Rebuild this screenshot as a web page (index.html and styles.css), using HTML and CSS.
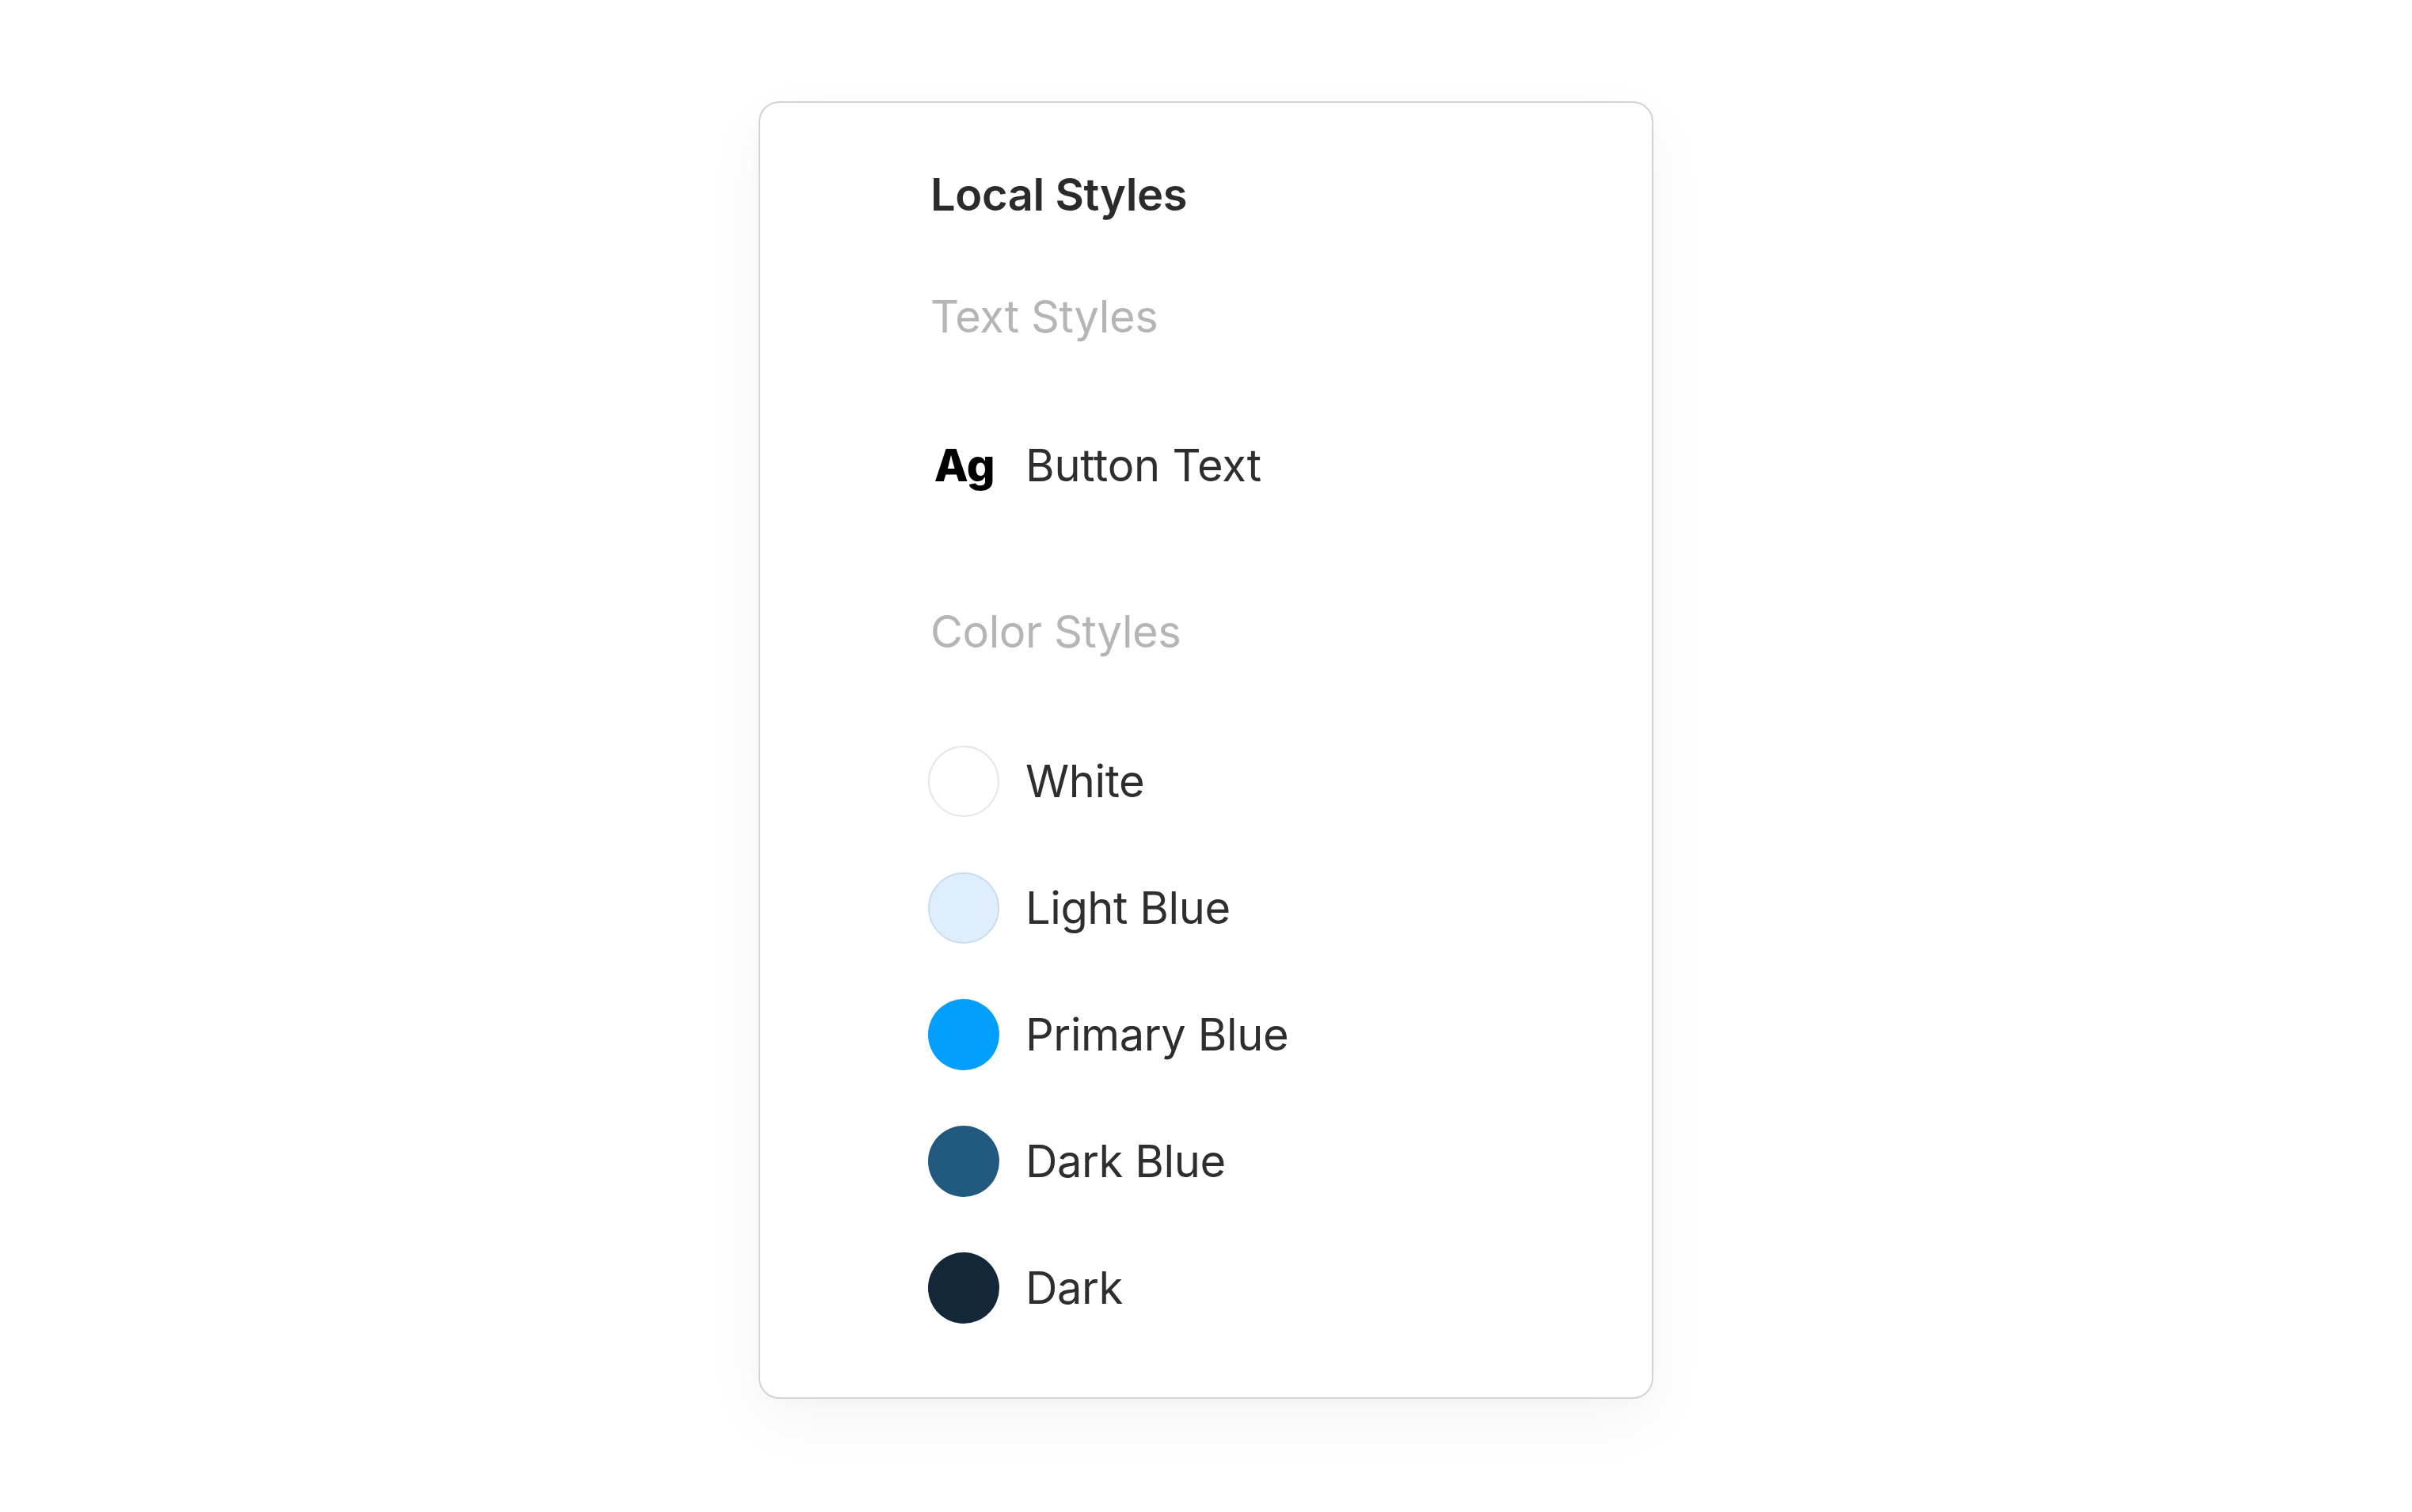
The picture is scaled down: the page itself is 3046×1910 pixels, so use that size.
FILE: index.html
```html
<!DOCTYPE html>
<html lang="en">
<head>
<meta charset="utf-8">
<title>Local Styles</title>
<link rel="stylesheet" href="styles.css">
</head>
<body>
<main class="stage">
  <section class="panel">
    <h1 class="panel-title">Local Styles</h1>
    <h2 class="group-title group-title--text">Text Styles</h2>
    <div class="style-row style-row--text">
      <span class="swatch swatch--type">Ag</span>
      <span class="style-name">Button Text</span>
    </div>
    <h2 class="group-title group-title--color">Color Styles</h2>
    <ul class="color-list">
      <li class="style-row"><span class="swatch swatch--white"></span><span class="style-name">White</span></li>
      <li class="style-row"><span class="swatch swatch--light"></span><span class="style-name">Light Blue</span></li>
      <li class="style-row"><span class="swatch swatch--primary"></span><span class="style-name">Primary Blue</span></li>
      <li class="style-row"><span class="swatch swatch--darkblue"></span><span class="style-name">Dark Blue</span></li>
      <li class="style-row"><span class="swatch swatch--dark"></span><span class="style-name">Dark</span></li>
    </ul>
  </section>
</main>
</body>
</html>
```

FILE: styles.css
```css
* { box-sizing: border-box; }

html, body {
  margin: 0;
  padding: 0;
  background: #ffffff;
}

body {
  font-family: "Inter", "Noto Sans", sans-serif;
  font-size: 56px;
  line-height: 68px;
  letter-spacing: -0.4px;
  color: #333333;
}

.stage {
  display: flex;
  justify-content: center;
  padding-top: 128px;
  min-height: 1910px;
}

.panel {
  width: 1130px;
  height: 1639px;
  border: 2px solid #d3d3d3;
  border-radius: 26px;
  background: #ffffff;
  box-shadow: 0 28px 80px rgba(0, 0, 0, 0.045), 0 4px 20px rgba(0, 0, 0, 0.02);
  padding: 82px 40px 0 212px;
  display: flex;
  flex-direction: column;
  align-items: flex-start;
}

.panel-title {
  margin: 0;
  padding-left: 3px;
  font-size: 56px;
  line-height: 68px;
  font-weight: 600;
  color: #2b2b2b;
}

.group-title {
  margin: 0;
  padding-left: 3px;
  font-size: 56px;
  line-height: 68px;
  font-weight: 400;
  color: #b5b5b5;
}

.group-title--text { margin-top: 86px; }
.group-title--color { margin-top: 142px; }

.style-row {
  display: flex;
  align-items: center;
  gap: 33px;
}

.style-row--text { margin-top: 120px; }

.style-row--text .style-name { letter-spacing: -0.2px; }

.style-name {
  font-size: 56px;
  line-height: 68px;
  color: #2e2e2e;
}

.color-list {
  list-style: none;
  margin: 110px 0 0;
  padding: 0;
  display: flex;
  flex-direction: column;
  gap: 70px;
}

.swatch {
  flex: 0 0 90px;
  width: 90px;
  height: 90px;
  border-radius: 50%;
}

.swatch--type {
  height: 68px;
  border-radius: 0;
  padding-left: 2px;
  text-align: center;
  font-weight: 800;
  font-size: 56px;
  line-height: 68px;
  color: #000000;
}

.swatch--white { background: #ffffff; border: 2px solid #e6e6e6; }
.swatch--light { background: #dfeefc; border: 2px solid #c9ddef; }
.swatch--primary { background: #009ffd; }
.swatch--darkblue { background: #22597e; }
.swatch--dark { background: #132739; }
```
